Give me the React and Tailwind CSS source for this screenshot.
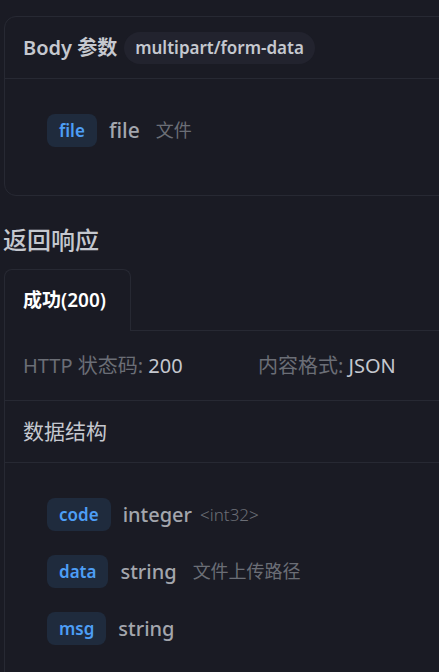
import React from 'react';

const font = { fontFamily: '"Noto Sans", "Noto Sans CJK SC", sans-serif' };

const FieldRow = ({ name, type, extra, desc }) => (
  <div className="flex items-center h-[57px]">
    <span className="h-[33px] px-[12px] flex items-center rounded-lg bg-[#1f2b3d] text-[#4d9ef5] text-[17px] font-semibold">
      {name}
    </span>
    <span className="ml-[12px] text-[20px] font-medium text-[#a3a6ad]">{type}</span>
    {extra && <span className="ml-[8px] text-[17px] font-light text-[#6b6e76]">{extra}</span>}
    {desc && <span className="ml-[16px] text-[18px] text-[#6b6e76]">{desc}</span>}
  </div>
);

export default function App() {
  return (
    <div className="w-[439px] h-[672px] overflow-hidden bg-[#1a1b24]" style={font}>
      <div className="pt-[16px]">
        <div className="ml-[4px] w-[470px] rounded-xl border border-[#272933]">
          <div className="h-[62px] pl-[18px] flex items-center gap-[7px] border-b border-[#272933]">
            <span className="text-[20px] font-semibold text-[#c5c8cf]">Body 参数</span>
            <span className="h-[32px] px-[11px] flex items-center rounded-full bg-[#22232e] text-[17px] font-semibold text-[#c5c8cf]">
              multipart/form-data
            </span>
          </div>
          <div className="h-[116px] pl-[42px] pt-[35px] flex items-start">
            <div className="flex items-center">
              <span className="h-[33px] px-[12px] flex items-center rounded-lg bg-[#1f2b3d] text-[#4d9ef5] text-[17px] font-semibold">
                file
              </span>
              <span className="ml-[12px] text-[21px] font-medium text-[#a3a6ad]">file</span>
              <span className="ml-[16px] text-[18px] text-[#6b6e76]">文件</span>
            </div>
          </div>
        </div>
      </div>

      <div className="h-[73px] pl-[3px] pb-[13px] flex items-end text-[24px] font-medium leading-[32px] text-[#c5c8cf]">
        返回响应
      </div>

      <div className="ml-[4px] w-[470px]">
        <div className="flex">
          <div className="w-[127px] h-[62px] pl-[18px] flex items-center rounded-t-lg border-t border-l border-r border-[#272933] text-[19px] font-semibold text-white">
            成功(200)
          </div>
          <div className="flex-1 border-b border-[#272933]" />
        </div>
        <div className="border-l border-[#272933]">
          <div className="h-[70px] pl-[18px] flex items-center text-[20px] border-b border-[#272933]">
            <span className="w-[235px]">
              <span className="text-[#6b6e76]">HTTP 状态码: </span>
              <span className="text-[#c5c8cf]">200</span>
            </span>
            <span>
              <span className="text-[#6b6e76]">内容格式: </span>
              <span className="text-[#c5c8cf]">JSON</span>
            </span>
          </div>
          <div className="h-[62px] pl-[18px] flex items-center text-[21px] text-[#c5c8cf] border-b border-[#272933]">
            数据结构
          </div>
          <div className="pl-[42px] pt-[23px] pb-[20px]">
            <FieldRow name="code" type="integer" extra="<int32>" />
            <FieldRow name="data" type="string" desc="文件上传路径" />
            <FieldRow name="msg" type="string" />
          </div>
        </div>
      </div>
    </div>
  );
}
